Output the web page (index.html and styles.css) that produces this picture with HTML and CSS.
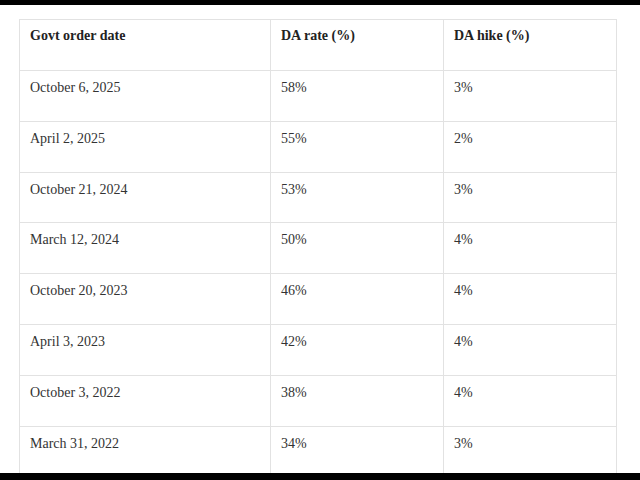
FILE: index.html
```html
<!DOCTYPE html>
<html lang="en">
<head>
<meta charset="utf-8">
<title>DA hikes</title>
<link rel="stylesheet" href="styles.css">
</head>
<body>
<div class="screen">
  <table class="da-table">
    <colgroup>
      <col class="c1"><col class="c2"><col class="c3">
    </colgroup>
    <thead>
      <tr><th>Govt order date</th><th>DA rate (%)</th><th>DA hike (%)</th></tr>
    </thead>
    <tbody>
      <tr><td>October 6, 2025</td><td>58%</td><td>3%</td></tr>
      <tr><td>April 2, 2025</td><td>55%</td><td>2%</td></tr>
      <tr><td>October 21, 2024</td><td>53%</td><td>3%</td></tr>
      <tr><td>March 12, 2024</td><td>50%</td><td>4%</td></tr>
      <tr><td>October 20, 2023</td><td>46%</td><td>4%</td></tr>
      <tr><td>April 3, 2023</td><td>42%</td><td>4%</td></tr>
      <tr><td>October 3, 2022</td><td>38%</td><td>4%</td></tr>
      <tr><td>March 31, 2022</td><td>34%</td><td>3%</td></tr>
    </tbody>
  </table>
</div>
<div class="bottom-bar"></div>
</body>
</html>
```

FILE: styles.css
```css
html, body {
  margin: 0;
  padding: 0;
  background: #000;
}
body {
  width: 640px;
  height: 480px;
  overflow: hidden;
  padding-top: 5px;
  box-sizing: border-box;
}
.screen {
  background: #fff;
  height: 468px;
  overflow: hidden;
  padding: 14px 0 0 19px;
  box-sizing: border-box;
}
.bottom-bar {
  height: 7px;
  background: #000;
}
.da-table {
  border-collapse: collapse;
  width: 597px;
  table-layout: fixed;
  font-family: "Liberation Serif", "Times New Roman", serif;
  font-size: 14px;
  color: #333;
}
.c1 { width: 251px; }
.c2 { width: 173px; }
.c3 { width: 173px; }
.da-table th,
.da-table td {
  border: 1px solid #e2e2e2;
  text-align: left;
  vertical-align: top;
  line-height: 20px;
  padding: 6px 10px 24px;
}
.da-table th {
  font-weight: bold;
  color: #222;
  padding-top: 6px;
}
.da-table td {
  padding-top: 7px;
  padding-bottom: 22.8px;
}
```
